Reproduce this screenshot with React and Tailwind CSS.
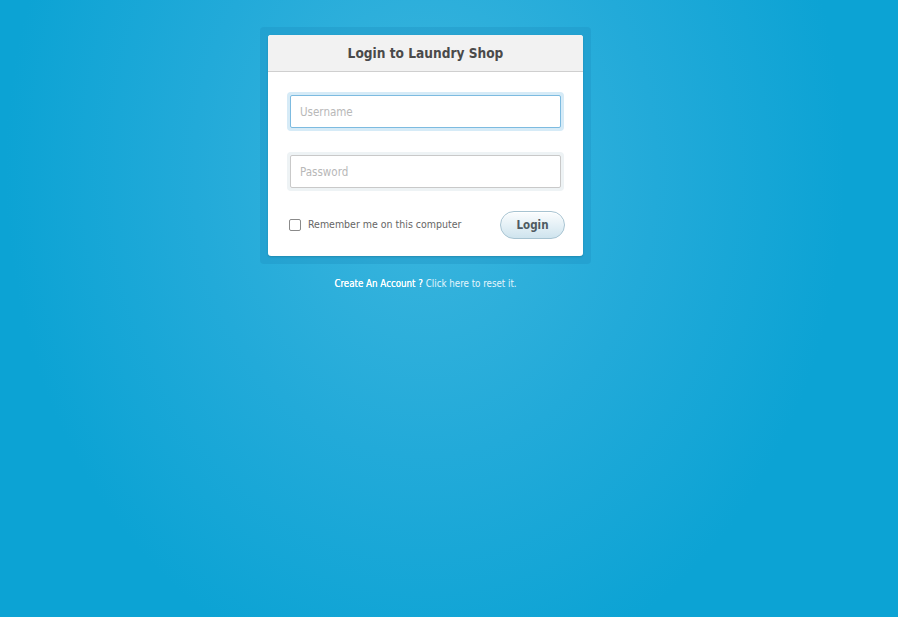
import React from "react";

export default function App() {
  return (
    <div
      className="min-h-[617px] w-full bg-[#0ca3d4] bg-[radial-gradient(ellipse_420px_520px_at_425px_170px,#3db6de_0%,#22aad9_55%,#0ca3d4_100%)] [font-family:'DejaVu_Sans_Condensed','DejaVu_Sans',sans-serif]"
    >
      <div className="flex flex-col items-center pr-[47px] pt-[27px]">
        <div className="rounded-[4px] bg-[#1d8fbf]/35 p-[8px]">
          <div className="w-[315px] overflow-hidden rounded-[3px] bg-white shadow-[0_1px_2px_rgba(0,0,0,0.15)]">
            <div className="flex h-[37px] items-center justify-center border-b border-[#cfcfcf] bg-[#f2f2f2] pt-[1px]">
              <h1 className="text-[13.6px] font-bold text-[#4a4a4a]">Login to Laundry Shop</h1>
            </div>
            <div className="flex flex-col px-[19px] pb-[17px] pt-[20px]">
              <div className="rounded-[4px] bg-[#d6ebf7] p-[3px]">
                <input
                  type="text"
                  placeholder="Username"
                  className="block h-[33px] w-full rounded-[2px] border border-[#7dbbe0] bg-white px-[9px] text-[11.5px] text-[#555] outline-none placeholder:text-[#b8b8b8]"
                />
              </div>
              <div className="mt-[21px] rounded-[4px] bg-[#eef3f5] p-[3px]">
                <input
                  type="password"
                  placeholder="Password"
                  className="block h-[33px] w-full rounded-[2px] border border-[#c9c9c9] bg-white px-[9px] text-[11.5px] text-[#555] outline-none placeholder:text-[#b8b8b8]"
                />
              </div>
              <div className="mt-[19px] flex h-[29px] items-center justify-between pl-[2px]">
                <label className="flex items-center gap-[7px] text-[10.5px] text-[#666]">
                  <span className="block h-[12px] w-[12px] rounded-[2px] border border-[#8a8a8a] bg-white" />
                  Remember me on this computer
                </label>
                <button className="mr-[-1px] h-[28px] w-[65px] rounded-full border border-[#a7c3d1] bg-gradient-to-b from-[#fbfdfe] to-[#cfe4ee] pt-[2px] text-[11.5px] font-bold text-[#4f5b62] shadow-[inset_0_1px_0_#fff]">
                  Login
                </button>
              </div>
            </div>
          </div>
        </div>
        <p className="mt-[13px] text-[9.7px] text-white">
          <span className="[text-shadow:0_0_0.5px_#fff]">Create An Account ?</span>{" "}
          <span className="text-[#e6f6fc]">Click here to reset it.</span>
        </p>
      </div>
    </div>
  );
}
